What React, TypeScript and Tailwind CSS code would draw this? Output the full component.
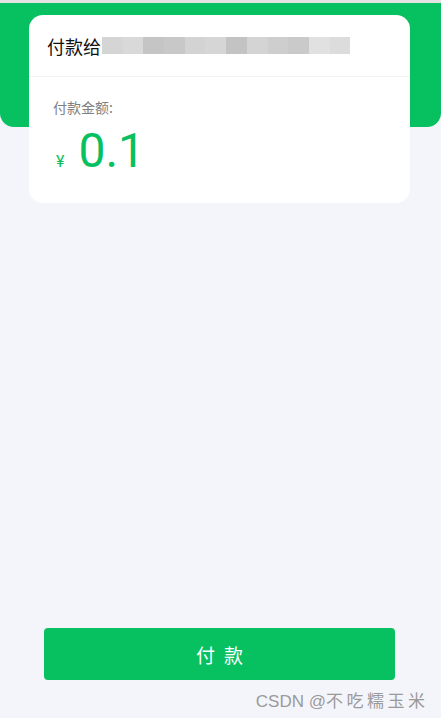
import React from "react";

const blocks = [
  "#d5d5d5",
  "#d9d9d9",
  "#c5c5c5",
  "#c8c8c8",
  "#d3d3d3",
  "#d6d6d6",
  "#c3c3c3",
  "#d4d4d4",
  "#cecece",
  "#cacaca",
  "#e1e1e1",
  "#dcdcdc",
];

export default function App() {
  return (
    <div
      className="flex h-[718px] w-[441px] flex-col overflow-hidden bg-[#f4f5fa]"
      style={{ fontFamily: '"Noto Sans CJK SC", "Noto Sans", Roboto, sans-serif' }}
    >
      <div className="h-[3px] w-full shrink-0 bg-[#e3e3e3]" />
      <div className="h-[124px] w-full shrink-0 rounded-b-[14px] bg-[#07c160]" />
      <div className="mx-[29px] mt-[-112px] w-[381px] shrink-0 rounded-[14px] bg-white">
        <div className="flex h-[61px] items-center pl-[18px]">
          <span className="text-[18px] leading-none text-[#111111]">付款给</span>
          <div className="ml-px flex h-[17px]">
            {blocks.map((c, i) => (
              <div key={i} className="h-full w-[20.7px]" style={{ backgroundColor: c }} />
            ))}
          </div>
        </div>
        <div className="h-px w-full bg-[#f3f3f3]" />
        <div className="pb-[28px] pl-[24px] pt-[20px]">
          <div className="text-[14px] leading-[20px] text-[#808080]">付款金额:</div>
          <div
            className="mt-[10px] flex items-baseline text-[#07c160]"
            style={{ fontFamily: "Roboto, 'Noto Sans', sans-serif" }}
          >
            <span className="ml-[3px] text-[16px] leading-none">¥</span>
            <span className="ml-[14px] text-[48px] leading-none">0.1</span>
          </div>
        </div>
      </div>
      <div className="flex-1" />
      <div className="ml-[44px] flex h-[52px] w-[351px] shrink-0 items-center justify-center gap-[9px] rounded-[4px] bg-[#07c160] text-[19px] leading-none text-white">
        <span>付</span>
        <span>款</span>
      </div>
      <div className="mt-[10px] h-[28px] shrink-0 pr-[16px] text-right text-[17px] leading-[20px] text-[#9a9a9a]">
        <span style={{ fontFamily: '"Liberation Sans", Arial, sans-serif' }}>CSDN @</span>
        <span style={{ letterSpacing: "3.5px", marginRight: "-3.5px" }}>不吃糯玉米</span>
      </div>
    </div>
  );
}
